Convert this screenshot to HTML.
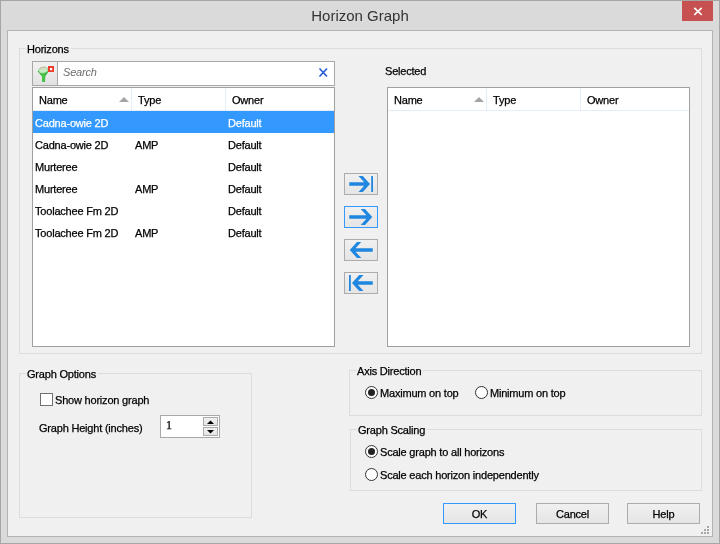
<!DOCTYPE html>
<html><head><meta charset="utf-8">
<style>
*{box-sizing:border-box;margin:0;padding:0}
html,body{width:720px;height:544px;overflow:hidden;background:#dadada}
body{position:relative;font-family:"Liberation Sans",sans-serif;font-size:11px;color:#000;letter-spacing:-0.2px;-webkit-text-stroke:0.25px}
.a{position:absolute}
.t{position:absolute;white-space:nowrap;line-height:12px;will-change:transform}
#win{left:0;top:0;width:720px;height:544px;border:1px solid #a6a6a6;background:#dadada}
#client{left:7px;top:30px;width:706px;height:507px;border:1px solid #b4b4b4;background:#f0f0f0}
#title{left:0;width:720px;top:6.5px;text-align:center;font-size:15px;color:#333;letter-spacing:0px;line-height:18px;-webkit-text-stroke:0}
#close{left:682px;top:1px;width:31px;height:20px;background:#c75050}
.grp{position:absolute;border:1px solid #dcdcdc}
.glabel{position:absolute;background:#f0f0f0;padding:0 2px 0 1px;white-space:nowrap;line-height:12px;will-change:transform}
.list{position:absolute;background:#fff;border:1px solid #a0a0a0}
.hdr{position:absolute;left:0;top:0;height:23px;right:0;border-bottom:1px solid #e5eef8}
.sep{position:absolute;top:0;width:1px;height:22px;background:#e5eef8}
.sort{position:absolute;width:0;height:0;border-left:5px solid transparent;border-right:5px solid transparent;border-bottom:5.5px solid #a5a5a5}
.row{position:absolute;left:0;right:0;height:22px}
.sel{background:#3399ff;color:#fff}
.btn{position:absolute;border:1px solid #acacac;background:linear-gradient(#f0f0f0,#e5e5e5)}
.btn.def{border-color:#3399ff}
.radio{position:absolute;width:13px;height:13px;border-radius:50%;border:1px solid #333;background:#fff}
.radio.on::after{content:"";position:absolute;left:2px;top:2px;width:7px;height:7px;border-radius:50%;background:#222}
</style></head><body>
<div id="win" class="a"></div>
<div id="title" class="t">Horizon Graph</div>
<div id="close" class="a">
  <svg width="31" height="20" style="position:absolute;left:0;top:0"><path d="M12.3 6.8 L19.7 13.8 M19.7 6.8 L12.3 13.8" stroke="#fff" stroke-width="1.6"/></svg>
</div>
<div id="client" class="a"></div>

<!-- Horizons group -->
<div class="grp" style="left:19px;top:48px;width:683px;height:306px"></div>
<div class="glabel" style="left:26px;top:43px">Horizons</div>

<!-- search box -->
<div class="a" style="left:32px;top:61px;width:303px;height:25px;border:1px solid #a8a8a8;background:#fff"></div>
<div class="a" style="left:32px;top:61px;width:26px;height:25px;border:1px solid #a8a8a8;background:linear-gradient(#f2f2f2,#e2e2e2)"></div>
<svg class="a" style="left:32px;top:61px" width="26" height="25">
  <defs><linearGradient id="fg" x1="0" x2="1" y1="0" y2="0"><stop offset="0" stop-color="#139a1c"/><stop offset="0.5" stop-color="#4cc94c"/><stop offset="1" stop-color="#1ea325"/></linearGradient></defs>
  <path d="M5.5 10 Q11 9 16.5 10.5 L13.2 15.5 L13.2 20.5 Q11.5 21.5 10 20.5 L10 15.5 Z" fill="url(#fg)"/>
  <ellipse cx="11.2" cy="9.2" rx="4.6" ry="3" fill="#c8eac2" stroke="#6cc46c" stroke-width="0.6" transform="rotate(-10 11.2 9.2)"/>
  <path d="M8 7.6 Q10.5 6 13.5 6.8" stroke="#f0a8a8" stroke-width="0.9" fill="none"/>
  <rect x="16" y="5" width="6" height="6" fill="#ee3b2b"/>
  <rect x="18" y="7" width="2.2" height="2.2" fill="#fff"/>
</svg>
<div class="t" style="left:63px;top:66px;font-style:italic;color:#6d6d6d;-webkit-text-stroke:0">Search</div>
<svg class="a" style="left:318px;top:67px" width="11" height="11"><path d="M1.5 1.5 L9 9.5 M9 1.5 L1.5 9.5" stroke="#2a5bd7" stroke-width="1.7"/></svg>

<!-- left list -->
<div class="list" style="left:32px;top:87px;width:303px;height:260px">
  <div class="hdr"></div>
  <div class="sep" style="left:98px"></div>
  <div class="sep" style="left:192px"></div>
  <div class="sort" style="left:86px;top:9px"></div>
  <div class="t" style="left:6px;top:6px">Name</div>
  <div class="t" style="left:105px;top:6px">Type</div>
  <div class="t" style="left:199px;top:6px">Owner</div>
  <div class="row sel" style="top:23px"><div class="t" style="left:2px;top:6px">Cadna-owie 2D</div><div class="t" style="left:195px;top:6px">Default</div></div>
  <div class="row" style="top:45px"><div class="t" style="left:2px;top:6px">Cadna-owie 2D</div><div class="t" style="left:102px;top:6px">AMP</div><div class="t" style="left:195px;top:6px">Default</div></div>
  <div class="row" style="top:67px"><div class="t" style="left:2px;top:6px">Murteree</div><div class="t" style="left:195px;top:6px">Default</div></div>
  <div class="row" style="top:89px"><div class="t" style="left:2px;top:6px">Murteree</div><div class="t" style="left:102px;top:6px">AMP</div><div class="t" style="left:195px;top:6px">Default</div></div>
  <div class="row" style="top:111px"><div class="t" style="left:2px;top:6px">Toolachee Fm 2D</div><div class="t" style="left:195px;top:6px">Default</div></div>
  <div class="row" style="top:133px"><div class="t" style="left:2px;top:6px">Toolachee Fm 2D</div><div class="t" style="left:102px;top:6px">AMP</div><div class="t" style="left:195px;top:6px">Default</div></div>
</div>

<!-- transfer buttons -->
<div class="btn" style="left:344px;top:173px;width:34px;height:22px"></div>
<div class="btn def" style="left:344px;top:206px;width:34px;height:22px"></div>
<div class="btn" style="left:344px;top:239px;width:34px;height:22px"></div>
<div class="btn" style="left:344px;top:272px;width:34px;height:22px"></div>
<svg class="a" style="left:344px;top:173px" width="34" height="22">
  <path d="M5.25 9.25 H22 V12.75 H5.25 Z M14.5 3 H18.75 L26 11 L18.75 19 H14.5 L21.75 11 Z" fill="#1f87e0"/><rect x="27.2" y="3" width="1.8" height="16" fill="#1f87e0"/>
</svg>
<svg class="a" style="left:344px;top:206px" width="34" height="22">
  <path d="M5.25 9.25 H24 V12.75 H5.25 Z M16.75 3 H21 L28.25 11 L21 19 H16.75 L24 11 Z" fill="#1f87e0"/>
</svg>
<svg class="a" style="left:344px;top:239px" width="34" height="22">
  <path d="M28.75 9.25 H10 V12.75 H28.75 Z M17.25 3 H13 L5.75 11 L13 19 H17.25 L10 11 Z" fill="#1f87e0"/>
</svg>
<svg class="a" style="left:344px;top:272px" width="34" height="22">
  <path d="M28.75 9.25 H12 V12.75 H28.75 Z M19.5 3 H15.25 L8 11 L15.25 19 H19.5 L12.25 11 Z" fill="#1f87e0"/><rect x="5" y="3" width="1.8" height="16" fill="#1f87e0"/>
</svg>

<!-- right list -->
<div class="t" style="left:385px;top:65px">Selected</div>
<div class="list" style="left:387px;top:87px;width:303px;height:260px">
  <div class="hdr"></div>
  <div class="sep" style="left:98px"></div>
  <div class="sep" style="left:192px"></div>
  <div class="sort" style="left:86px;top:9px"></div>
  <div class="t" style="left:6px;top:6px">Name</div>
  <div class="t" style="left:105px;top:6px">Type</div>
  <div class="t" style="left:199px;top:6px">Owner</div>
</div>

<!-- Graph Options -->
<div class="grp" style="left:19px;top:373px;width:233px;height:145px"></div>
<div class="glabel" style="left:26px;top:368px">Graph Options</div>
<div class="a" style="left:40px;top:393px;width:13px;height:13px;border:1px solid #707070;background:#fff"></div>
<div class="t" style="left:55px;top:394px">Show horizon graph</div>
<div class="t" style="left:39px;top:422px">Graph Height (inches)</div>
<div class="a" style="left:160px;top:415px;width:60px;height:23px;border:1px solid #a8a8a8;background:#fff"></div>
<div class="t" style="left:166px;top:419px;font-family:'Liberation Serif',serif;font-size:12px">1</div>
<div class="btn" style="left:203px;top:417px;width:15px;height:9px"></div>
<div class="btn" style="left:203px;top:427px;width:15px;height:9px"></div>
<svg class="a" style="left:203px;top:417px" width="15" height="19"><path d="M4 7 L11 7 L7.5 3.5 Z" fill="#000"/><path d="M4 13 L11 13 L7.5 16.5 Z" fill="#000"/></svg>

<!-- Axis Direction -->
<div class="grp" style="left:349px;top:370px;width:353px;height:46px"></div>
<div class="glabel" style="left:356px;top:365px">Axis Direction</div>
<div class="radio on" style="left:365px;top:386px"></div>
<div class="t" style="left:380px;top:387px">Maximum on top</div>
<div class="radio" style="left:475px;top:386px"></div>
<div class="t" style="left:490px;top:387px">Minimum on top</div>

<!-- Graph Scaling -->
<div class="grp" style="left:350px;top:429px;width:352px;height:62px"></div>
<div class="glabel" style="left:357px;top:424px">Graph Scaling</div>
<div class="radio on" style="left:365px;top:445px"></div>
<div class="t" style="left:380px;top:446px">Scale graph to all horizons</div>
<div class="radio" style="left:365px;top:468px"></div>
<div class="t" style="left:380px;top:468.5px">Scale each horizon independently</div>

<!-- buttons -->
<div class="btn def" style="left:443px;top:503px;width:73px;height:21px"></div>
<div class="t" style="left:443px;top:508px;width:73px;text-align:center">OK</div>
<div class="btn" style="left:536px;top:503px;width:73px;height:21px"></div>
<div class="t" style="left:536px;top:508px;width:73px;text-align:center">Cancel</div>
<div class="btn" style="left:627px;top:503px;width:73px;height:21px"></div>
<div class="t" style="left:627px;top:508px;width:73px;text-align:center">Help</div>

<svg class="a" style="left:700px;top:525px" width="10" height="10" fill="#a8a8a8"><rect x="7" y="1" width="2" height="2"/><rect x="4" y="4" width="2" height="2"/><rect x="7" y="4" width="2" height="2"/><rect x="1" y="7" width="2" height="2"/><rect x="4" y="7" width="2" height="2"/><rect x="7" y="7" width="2" height="2"/></svg>
</body></html>
